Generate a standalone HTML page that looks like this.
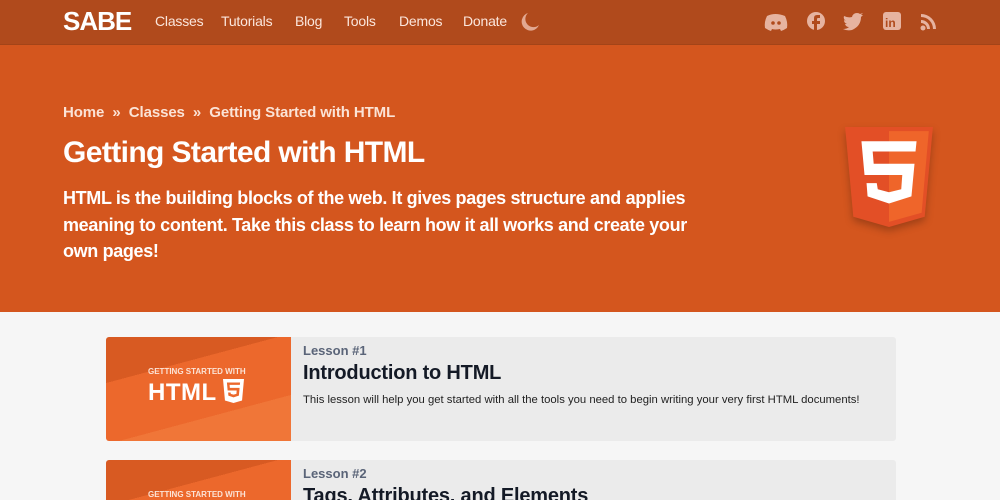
<!DOCTYPE html>
<html><head><style>
*{margin:0;padding:0;box-sizing:border-box}
html,body{width:1000px;height:500px;overflow:hidden}
body{font-family:"Liberation Sans",sans-serif;background:#f6f6f6;position:relative}
.top{position:absolute;left:0;top:0;width:1000px;height:45px;background:#b04a1c;border-bottom:1px solid #a34418}
.logo{position:absolute;left:63px;top:6px;color:#fff;font-weight:bold;font-size:26px;letter-spacing:-1px}
.nav{position:absolute;top:13px;font-size:14px;color:#fbe6dc;letter-spacing:-0.2px}
.hero{position:absolute;left:0;top:45px;width:1000px;height:267px;background:#d4561e}
.crumb{position:absolute;left:63px;top:104px;color:#fbe3d6;font-size:15px;font-weight:bold;letter-spacing:-0.1px}
h1{position:absolute;left:63px;top:136px;color:#fff;font-size:30px;letter-spacing:-0.6px}
.desc{position:absolute;left:63px;top:185px;width:650px;color:#fff;font-size:18px;font-weight:bold;line-height:26.5px;letter-spacing:-0.35px}
.card{position:absolute;left:106px;width:790px;height:104px;background:#ebebeb;border-radius:3px;overflow:hidden}
.thumb{position:absolute;left:0;top:0;width:185px;height:104px;background:linear-gradient(165deg,#d85a22 0 30%,#ec682c 30% 70%,#f07638 70%)}
.thumb .s{position:absolute;left:42px;top:30px;color:#fbe3d6;font-size:8px;font-weight:bold}
.thumb .b{position:absolute;left:42px;top:42px;color:#fff;font-size:24px;font-weight:bold;letter-spacing:0.5px}
.ln{position:absolute;left:197px;top:6px;color:#5a6478;font-size:13px;font-weight:bold}
.tt{position:absolute;left:197px;top:25px;color:#141a26;font-size:20px;font-weight:bold;letter-spacing:-0.2px}
.ds{position:absolute;left:197px;top:57px;color:#222;font-size:11.3px}
</style></head><body>
<div class="top">
<div class="logo">SABE</div>
<span class="nav" style="left:155px">Classes</span>
<span class="nav" style="left:221px">Tutorials</span>
<span class="nav" style="left:295px">Blog</span>
<span class="nav" style="left:344px">Tools</span>
<span class="nav" style="left:399px">Demos</span>
<span class="nav" style="left:463px">Donate</span>
<svg style="position:absolute;left:519px;top:11px" width="22" height="22" viewBox="0 0 22 22"><path d="M9 2a9 9 0 1 0 11 12A8 8 0 0 1 9 2z" fill="#e2a891"/></svg>
<svg style="position:absolute;left:764px;top:10px" width="180" height="24" viewBox="0 0 180 24" fill="#e6b3a0">
<path d="M3 6q8-4 18 0q3 6 2 12q-3 2-6 3l-1-2q-5 1-8 0l-1 2q-3-1-6-3q-1-6 2-12z"/><circle cx="9" cy="13" r="1.8" fill="#b04a1c"/><circle cx="15" cy="13" r="1.8" fill="#b04a1c"/>
<circle cx="52" cy="11" r="9"/><path d="M53 21v-7h3v-3h-3v-2q0-1 1-1h2v-3h-3q-3 0-3 3v3h-2v3h2v7z" fill="#b04a1c"/>
<path d="M80 6q4 2 8 1q1-4 5-4q2 0 3 1l3-1l-2 2l2 0l-2 2q0 9-9 13q-5 1-9-1q4 0 6-2q-3 0-4-3h2q-3-1-3-4l2 1q-3-2-2-5z"/>
<rect x="119" y="2" width="18" height="18" rx="3"/><text x="121" y="17" font-family="Liberation Sans" font-weight="bold" font-size="12" fill="#b04a1c">in</text>
<circle cx="159" cy="18" r="2.5"/><path d="M157 10a9 9 0 0 1 9 9h-3a6 6 0 0 0-6-6zM157 4a15 15 0 0 1 15 15h-3a12 12 0 0 0-12-12z"/>
</svg>
</div>
<div class="hero">
<svg style="position:absolute;left:845px;top:82px;filter:drop-shadow(0 4px 4px rgba(0,0,0,.25))" width="88" height="100" viewBox="0 0 86 98"><path d="M0 0h86l-8 88-35 10-35-10z" fill="#e34f26"/><path d="M43 4h39l-7 80-32 9z" fill="#ef652a"/><path d="M16 14h54l-1 10H27l1 12h40l-3 32-22 7-21-7-1-13h10l1 6 11 3 12-3 1-14H19z" fill="#fff"/></svg>
</div>
<div class="crumb">Home &nbsp;»&nbsp; Classes &nbsp;»&nbsp; Getting Started with HTML</div>
<h1>Getting Started with HTML</h1>
<div class="desc">HTML is the building blocks of the web. It gives pages structure and applies meaning to content. Take this class to learn how it all works and create your own pages!</div>
<div class="card" style="top:337px"><div class="thumb"><div class="s">GETTING STARTED WITH</div><div class="b">HTML<svg style="margin-left:6px;vertical-align:-3px" width="21" height="24" viewBox="0 0 86 98"><path d="M0 0h86l-8 88-35 10-35-10z" fill="#fff"/><path d="M16 14h54l-1 10H27l1 12h40l-3 32-22 7-21-7-1-13h10l1 6 11 3 12-3 1-14H19z" fill="#ec682c"/></svg></div></div>
<div class="ln">Lesson #1</div><div class="tt">Introduction to HTML</div><div class="ds">This lesson will help you get started with all the tools you need to begin writing your very first HTML documents!</div></div>
<div class="card" style="top:460px"><div class="thumb"><div class="s">GETTING STARTED WITH</div></div>
<div class="ln">Lesson #2</div><div class="tt">Tags, Attributes, and Elements</div></div>
</body></html>
